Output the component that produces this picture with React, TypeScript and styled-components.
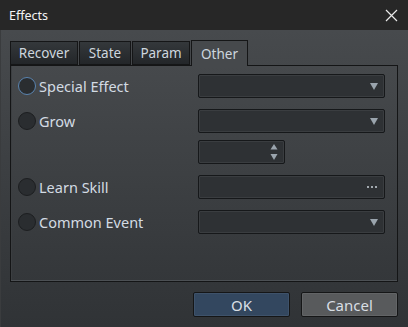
import React from "react";
import styled, { createGlobalStyle } from "styled-components";

const Global = createGlobalStyle`
  html, body { margin: 0; padding: 0; background: #2f3235; }
  body { font-family: "Noto Sans", "DejaVu Sans", sans-serif; }
  * { box-sizing: border-box; }
`;

const Window = styled.div`
  width: 408px;
  height: 327px;
  display: flex;
  flex-direction: column;
  overflow: hidden;
`;

const TitleBar = styled.div`
  height: 30px;
  flex: none;
  background: #272727;
  display: flex;
  align-items: center;
  justify-content: space-between;
  padding: 0 10px 0 9px;
  color: #f4f4f4;
  font-size: 12.5px;
`;

const CloseButton = styled.div`
  width: 14px;
  height: 14px;
  display: flex;
  align-items: center;
  justify-content: center;
`;

const Body = styled.div`
  flex: 1;
  display: flex;
  flex-direction: column;
  padding: 11px 10px 10px 9px;
  background: linear-gradient(#474a4d, #303336);
  border-left: 1px solid #3a3c3e;
`;

const TabRow = styled.div`
  display: flex;
  height: 24px;
  flex: none;
  position: relative;
  z-index: 1;
`;

const Tab = styled.div<{ $active?: boolean; $w: number }>`
  width: ${(p) => p.$w}px;
  height: ${(p) => (p.$active ? 26 : 24)}px;
  margin-top: ${(p) => (p.$active ? -1 : 0)}px;
  margin-right: 1px;
  display: flex;
  align-items: center;
  justify-content: center;
  font-size: 13.5px;
  color: #cdd6de;
  border: 1px solid #151617;
  border-bottom: ${(p) => (p.$active ? "none" : "1px solid #151617")};
  background: ${(p) =>
    p.$active ? "#46494c" : "linear-gradient(#34383b, #232629)"};
  padding-top: ${(p) => (p.$active ? 1 : 0)}px;
`;

const Panel = styled.div`
  flex: 1;
  border: 1px solid #141516;
  box-shadow: inset 0 -1px 0 #4c5054, inset 1px 0 0 #3c3f42;
  background: linear-gradient(#46494c, #34373a);
  padding: 8px 12px 0 7px;
  display: flex;
  flex-direction: column;
`;

const Row = styled.div<{ $top: number }>`
  display: grid;
  grid-template-columns: 1fr 187px;
  align-items: center;
  margin-top: ${(p) => p.$top}px;
`;

const Label = styled.label`
  display: flex;
  align-items: center;
  gap: 3px;
  font-size: 14.5px;
  color: #d3dbe3;
`;

const Radio = styled.span<{ $focus?: boolean }>`
  width: 18px;
  height: 18px;
  border-radius: 50%;
  background: #2a2d30;
  border: ${(p) => (p.$focus ? "1.5px solid #5a84b0" : "1px solid #1c1e20")};
  flex: none;
`;

const Field = styled.div<{ $w?: number }>`
  grid-column: 2;
  width: ${(p) => (p.$w ? `${p.$w}px` : "100%")};
  height: 24px;
  border: 1px solid #16181a;
  border-radius: 2px;
  background: #2e3134;
  box-shadow: inset 0 0 0 1px #3a3d40;
  display: flex;
  align-items: center;
  justify-content: flex-end;
  padding-right: 6px;
`;

const Dots = styled.span`
  display: flex;
  gap: 2px;
  margin-right: 1px;
`;

const Dot = styled.span`
  width: 2px;
  height: 2px;
  background: #a2a9af;
`;

const Footer = styled.div`
  display: flex;
  justify-content: flex-end;
  gap: 11px;
  margin-top: 10px;
  flex: none;
`;

const Button = styled.div<{ $primary?: boolean }>`
  width: 97px;
  height: 25px;
  border: 1px solid #151617;
  border-radius: 2px;
  background: ${(p) => (p.$primary ? "#33475f" : "#585a5c")};
  box-shadow: inset 0 0 0 1px ${(p) => (p.$primary ? "#3e526a" : "#626466")};
  display: flex;
  align-items: center;
  justify-content: center;
  font-size: 15px;
  color: #d8dee4;
`;

const Arrow = () => (
  <svg width="8" height="7" viewBox="0 0 8 7">
    <path d="M0 0 H8 L4 7 Z" fill="#9aa4ad" />
  </svg>
);

const Spin = () => (
  <svg width="8" height="18" viewBox="0 0 8 18">
    <path d="M0.5 6.5 H7.5 L4 1 Z" fill="#9aa4ad" />
    <path d="M0.5 11 H7.5 L4 17 Z" fill="#9aa4ad" />
  </svg>
);

export default function App() {
  return (
    <>
      <Global />
      <Window>
        <TitleBar>
          <span>Effects</span>
          <CloseButton>
            <svg width="13" height="13" viewBox="0 0 13 13">
              <path d="M1 1 L12 12 M12 1 L1 12" stroke="#eaeaea" strokeWidth="1.2" />
            </svg>
          </CloseButton>
        </TitleBar>
        <Body>
          <TabRow>
            <Tab $w={68}>Recover</Tab>
            <Tab $w={52}>State</Tab>
            <Tab $w={58}>Param</Tab>
            <Tab $w={57} $active>
              Other
            </Tab>
          </TabRow>
          <Panel>
            <Row $top={0}>
              <Label>
                <Radio $focus />
                Special Effect
              </Label>
              <Field>
                <Arrow />
              </Field>
            </Row>
            <Row $top={11}>
              <Label>
                <Radio />
                Grow
              </Label>
              <Field>
                <Arrow />
              </Field>
            </Row>
            <Row $top={7}>
              <Field $w={87}>
                <Spin />
              </Field>
            </Row>
            <Row $top={11}>
              <Label>
                <Radio />
                Learn Skill
              </Label>
              <Field>
                <Dots>
                  <Dot />
                  <Dot />
                  <Dot />
                </Dots>
              </Field>
            </Row>
            <Row $top={11}>
              <Label>
                <Radio />
                Common Event
              </Label>
              <Field>
                <Arrow />
              </Field>
            </Row>
          </Panel>
          <Footer>
            <Button $primary>OK</Button>
            <Button>Cancel</Button>
          </Footer>
        </Body>
      </Window>
    </>
  );
}
